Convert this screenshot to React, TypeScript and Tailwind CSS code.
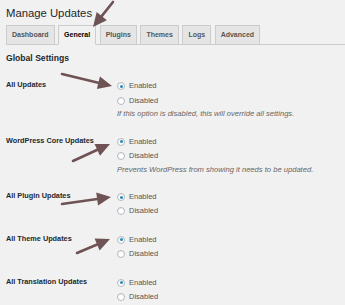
import React from "react";

const arrows: [number, number, number, number][] = [
  [113, 2, 93, 27],
  [62, 74, 112, 86],
  [73, 161, 110, 144],
  [62, 204, 111, 197],
  [77, 253, 110, 239],
];

function Arrow({ a }: { a: [number, number, number, number] }) {
  const [x1, y1, x2, y2] = a;
  const dx = x2 - x1;
  const dy = y2 - y1;
  const L = Math.hypot(dx, dy);
  const ux = dx / L;
  const uy = dy / L;
  const hl = 14;
  const hw = 6.5;
  const bx = x2 - ux * hl;
  const by = y2 - uy * hl;
  const pts = `${x2},${y2} ${bx - uy * hw},${by + ux * hw} ${bx + uy * hw},${by - ux * hw}`;
  return (
    <g>
      <line x1={x1} y1={y1} x2={bx + ux * 2} y2={by + uy * 2} stroke="#6f5254" strokeWidth={2.6} strokeLinecap="round" />
      <polygon points={pts} fill="#6f5254" />
    </g>
  );
}

function Radio({ checked, label }: { checked?: boolean; label: string }) {
  return (
    <div className="flex h-[14.4px] items-center">
      <span className="flex h-[8px] w-[8px] items-center justify-center rounded-full border border-[#b4b9be] bg-white shadow-[inset_0_1px_1px_rgba(0,0,0,0.07)]">
        {checked && <span className="h-[3px] w-[3px] rounded-full bg-[#1e8cbe]" />}
      </span>
      <span className="ml-[4px] text-[7.5px] leading-[10px] text-[#555]">{label}</span>
    </div>
  );
}

function Row({ label, desc }: { label: string; desc?: string }) {
  return (
    <div className="flex">
      <div className="-mt-[1px] flex h-[14.4px] w-[111px] shrink-0 items-center text-[7.3px] font-bold leading-[10px] text-[#23282d]">
        {label}
      </div>
      <div className="flex flex-col">
        <Radio checked label="Enabled" />
        <Radio label="Disabled" />
        {desc && (
          <div className="flex h-[12.5px] items-center text-[7.6px] italic leading-[10px] text-[#666]">{desc}</div>
        )}
      </div>
    </div>
  );
}

const tabs = ["Dashboard", "General", "Plugins", "Themes", "Logs", "Advanced"];

export default function App() {
  return (
    <div className="relative h-[305px] w-[345px] overflow-hidden bg-[#f1f1f1] font-['Liberation_Sans',Arial,sans-serif]">
      <div className="pl-[6px] pt-[5.5px]">
        <h1 className="text-[11.3px] font-normal leading-[14px] text-[#23282d]">Manage Updates</h1>
      </div>
      <div className="ml-[6px] mt-[5.5px] flex h-[20px] items-end gap-[3.5px] border-b border-[#ccc]">
        {tabs.map((t) => {
          const active = t === "General";
          return (
            <div
              key={t}
              className={
                active
                  ? "-mb-px flex h-[20px] items-center border border-[#ccc] border-b-[#f1f1f1] bg-[#f1f1f1] px-[5px] text-[7px] font-bold leading-[10px] text-[#000]"
                  : "-mb-px flex h-[20px] items-center border border-[#ccc] bg-[#e5e5e5] px-[5px] text-[7px] font-bold leading-[10px] text-[#555]"
              }
            >
              {t}
            </div>
          );
        })}
      </div>
      <div className="pl-[6px]">
        <h2 className="mt-[8px] text-[8.6px] font-bold leading-[10px] text-[#23282d]">Global Settings</h2>
        <div className="mt-[16.3px] flex flex-col gap-[14px]">
          <Row label="All Updates" desc="If this option is disabled, this will override all settings." />
          <Row label="WordPress Core Updates" desc="Prevents WordPress from showing it needs to be updated." />
          <Row label="All Plugin Updates" />
          <Row label="All Theme Updates" />
          <Row label="All Translation Updates" />
        </div>
      </div>
      <svg className="pointer-events-none absolute left-0 top-0" width={345} height={305}>
        {arrows.map((a, i) => (
          <Arrow key={i} a={a} />
        ))}
      </svg>
    </div>
  );
}
